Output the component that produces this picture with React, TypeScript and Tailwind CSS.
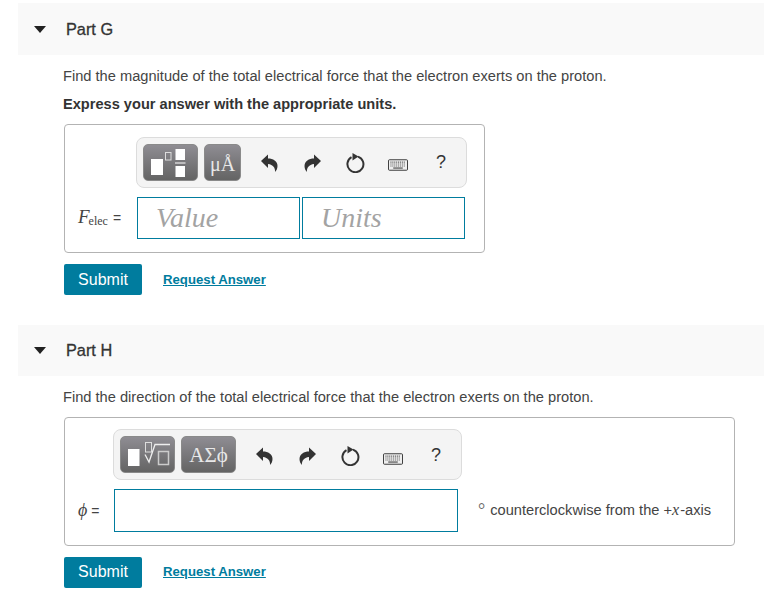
import React from 'react'

const sans = "font-['Liberation_Sans',Arial,sans-serif]"
const serif = "font-['Liberation_Serif',serif]"

function Undo() {
  return (
    <svg width="17" height="18" viewBox="0 0 17 18" className="text-[#333]">
      <path d="M0 7 L7 0.5 V4.5 C12 4.5 16.5 7 16.5 12 C16.5 14.5 15.5 16.5 14 18 C14.5 14 12 10.5 7 10 V14 Z" fill="currentColor" />
    </svg>
  )
}

function Redo() {
  return (
    <svg width="17" height="18" viewBox="0 0 17 18" className="text-[#333]">
      <path d="M17 7 L10 0.5 V4.5 C5 4.5 0.5 7 0.5 12 C0.5 14.5 1.5 16.5 3 18 C2.5 14 5 10.5 10 10 V14 Z" fill="currentColor" />
    </svg>
  )
}

function Reset() {
  return (
    <svg width="19" height="20" viewBox="0 0 19 20" className="text-[#333]">
      <path d="M5.5 4.2 A8 8 0 1 0 12 3.6" fill="none" stroke="currentColor" strokeWidth="2" />
      <path d="M6.5 0 L12.5 3.4 L6.5 7.4 Z" fill="currentColor" />
    </svg>
  )
}

function Keyboard() {
  return (
    <svg width="21" height="12" viewBox="0 0 21 12">
      <rect x="0.5" y="0.5" width="20" height="11" rx="1" fill="#eee" stroke="#333" />
      <path d="M2.5 3H18.5M2.5 5H18.5M2.5 7H18.5" stroke="#666" strokeWidth="1.2" strokeDasharray="1.2 0.8" />
      <path d="M5.5 9.2H15.5" stroke="#555" strokeWidth="1.3" />
    </svg>
  )
}

function ToolActions() {
  return (
    <div className="flex items-center gap-[23px]">
      <div className="w-[20px] flex justify-center"><Undo /></div>
      <div className="w-[20px] flex justify-center"><Redo /></div>
      <div className="w-[20px] flex justify-center"><Reset /></div>
      <div className="w-[20px] flex justify-center mt-[5px]"><Keyboard /></div>
      <div className={`w-[20px] text-center text-[18px] leading-[20px] text-[#333] -mt-[2px] ${sans}`}>?</div>
    </div>
  )
}

function TemplateIcon() {
  return (
    <svg width="35" height="28" viewBox="0 0 35 28" className="mr-[5px]">
      <rect x="0" y="10" width="12" height="16" fill="#fff" />
      <rect x="14.5" y="3.5" width="5.5" height="7.5" fill="none" stroke="#ddd" strokeWidth="1" />
      <rect x="24.5" y="0" width="9.5" height="11" fill="#fff" />
      <rect x="24" y="13.5" width="10.5" height="1" fill="#fff" />
      <rect x="24.5" y="17" width="9.5" height="11" fill="#fff" />
    </svg>
  )
}

function RootIcon() {
  return (
    <svg width="44" height="25" viewBox="0 0 44 25" className="ml-[3px]">
      <rect x="1" y="7" width="11.5" height="17" fill="#fff" />
      <rect x="18.5" y="0.5" width="6" height="9.5" fill="none" stroke="#ddd" strokeWidth="1" />
      <path d="M18 12.5 L22 20 L28 2.5 H43" fill="none" stroke="#eee" strokeWidth="1.3" />
      <rect x="31.5" y="9.5" width="10" height="13" fill="none" stroke="#ccc" strokeWidth="1.5" />
    </svg>
  )
}

function ToolButton({ width, children }: { width: string; children: React.ReactNode }) {
  return (
    <div className={`${width} h-[37px] rounded-[5px] border border-[#8a8a8a] bg-gradient-to-b from-[#8f8d93] to-[#646464] flex items-center justify-center`}>
      {children}
    </div>
  )
}

function Header({ title, height, titleOffset }: { title: string; height: string; titleOffset: string }) {
  return (
    <div className={`${height} ml-[18px] bg-[#f9f9f9] flex items-center pl-[16px]`}>
      <div className="w-0 h-0 border-l-[6px] border-r-[6px] border-t-[7px] border-l-transparent border-r-transparent border-t-[#222]" />
      <span className={`ml-[20px] ${titleOffset} text-[16.3px] font-normal text-[#333] [-webkit-text-stroke:0.3px_#333] ${sans}`}>{title}</span>
    </div>
  )
}

function Actions({ labelOffset }: { labelOffset: string }) {
  return (
    <div className="flex items-center">
      <div className={`w-[78px] h-[31px] bg-[#007c9e] rounded-[2px] text-white text-[16px] flex items-center justify-center ${sans}`}>
        <span className={labelOffset}>Submit</span>
      </div>
      <span className={`ml-[21px] text-[13.2px] font-bold text-[#007c9e] underline ${labelOffset} ${sans}`}>Request Answer</span>
    </div>
  )
}

export default function App() {
  return (
    <div className={`w-[764px] h-[593px] overflow-hidden bg-white pt-[3px] ${sans}`}>
      <Header title="Part G" height="h-[52px]" titleOffset="mt-px" />

      <div className="pl-[63px]">
        <p className="mt-[12px] text-[14.65px] leading-[18px] text-[#444]">
          Find the magnitude of the total electrical force that the electron exerts on the proton.
        </p>
        <p className="mt-[10px] text-[14.6px] leading-[18px] font-bold text-[#333]">Express your answer with the appropriate units.</p>

        <div className="mt-[11px] ml-px w-[421px] h-[129px] border border-[#b3b3b3] rounded-[4px] pt-[12px] pl-[71px]">
          <div className="w-[331px] h-[51px] bg-[#f4f4f4] border border-[#dcdcdc] rounded-[8px] flex items-center pl-[6px]">
            <div className="flex gap-[6px]">
              <ToolButton width="w-[55px]"><TemplateIcon /></ToolButton>
              <ToolButton width="w-[37px]">
                <span className={`${serif} text-[#e8e8e8] text-[20px] leading-[20px] mt-[2px]`}>μÅ</span>
              </ToolButton>
            </div>
            <div className="ml-[18px]">
              <ToolActions />
            </div>
          </div>
          <div className="relative mt-[9px] flex gap-[2px] pl-px">
            <div className="absolute left-[-58px] top-[6px] flex items-baseline text-[#444] whitespace-nowrap">
              <span className={`${serif} italic text-[19px]`}>F</span>
              <span className={`${serif} text-[12px] -ml-px relative top-[2px]`}>elec</span>
              <span className="text-[14px] ml-[5px]">=</span>
            </div>
            <div className={`w-[163px] h-[42px] border border-[#007c9e] pl-[18px] flex items-center ${serif} italic text-[28px] text-[#a3a3a3]`}>Value</div>
            <div className={`w-[163px] h-[42px] border border-[#007c9e] pl-[18px] flex items-center ${serif} italic text-[28px] text-[#a3a3a3]`}>Units</div>
          </div>
        </div>

        <div className="mt-[11px] ml-px"><Actions labelOffset="mt-px" /></div>
      </div>

      <div className="mt-[30px]"><Header title="Part H" height="h-[51px]" titleOffset="mt-0" /></div>

      <div className="pl-[63px]">
        <p className="mt-[12px] text-[14.65px] leading-[18px] text-[#444]">
          Find the direction of the total electrical force that the electron exerts on the proton.
        </p>

        <div className="mt-[11px] ml-px w-[671px] h-[129px] border border-[#b3b3b3] rounded-[4px] pt-[11px] pl-[48px]">
          <div className="w-[349px] h-[51px] bg-[#f4f4f4] border border-[#dcdcdc] rounded-[8px] flex items-center pl-[6px]">
            <div className="flex gap-[6px]">
              <ToolButton width="w-[55px]"><RootIcon /></ToolButton>
              <ToolButton width="w-[55px]">
                <span className={`${serif} text-[#e8e8e8] text-[21px] leading-[20px]`}>ΑΣϕ</span>
              </ToolButton>
            </div>
            <div className="ml-[18px] mt-[3px]">
              <ToolActions />
            </div>
          </div>
          <div className="relative mt-[9px] flex items-center pl-px">
            <div className="absolute left-[-35px] top-[8px] flex items-baseline text-[#444] whitespace-nowrap">
              <span className={`${serif} italic text-[18px]`}>ϕ</span>
              <span className="text-[14px] ml-[4px]">=</span>
            </div>
            <div className="w-[344px] h-[43px] border border-[#007c9e]" />
            <div className="ml-[20px] text-[14.65px] text-[#444] whitespace-nowrap flex items-baseline">
              <span className={`${serif} text-[18px] leading-[14px] relative top-[1px] mr-[5px] text-[#666]`}>°</span>
              <span>counterclockwise from the +</span>
              <span className={`${serif} italic text-[16px] leading-[14px] mr-px`}>x</span>
              <span>-axis</span>
            </div>
          </div>
        </div>

        <div className="mt-[11px] ml-px"><Actions labelOffset="-mt-px" /></div>
      </div>
    </div>
  )
}
